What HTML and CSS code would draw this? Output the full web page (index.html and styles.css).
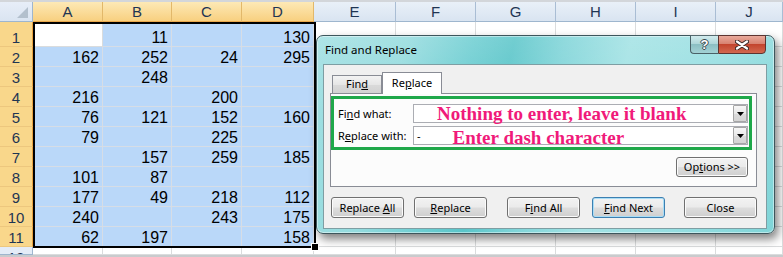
FILE: index.html
```html
<!DOCTYPE html>
<html>
<head>
<meta charset="utf-8">
<title>Find and Replace</title>
<link rel="stylesheet" href="styles.css">
</head>
<body>
<div class="screen">
  <div class="sheet">
    <div class="corner"><span class="tri"></span></div>
    <div class="ch hl">A</div><div class="ch hl">B</div><div class="ch hl">C</div><div class="ch hl">D</div>
    <div class="ch">E</div><div class="ch">F</div><div class="ch">G</div><div class="ch">H</div><div class="ch">I</div><div class="ch">J</div>

    <div class="rh hl">1</div><div class="c"></div><div class="c s">11</div><div class="c s"></div><div class="c s">130</div>
    <div class="c"></div><div class="c"></div><div class="c"></div><div class="c"></div><div class="c"></div><div class="c"></div>

    <div class="rh hl">2</div><div class="c s">162</div><div class="c s">252</div><div class="c s">24</div><div class="c s">295</div>
    <div class="c"></div><div class="c"></div><div class="c"></div><div class="c"></div><div class="c"></div><div class="c"></div>

    <div class="rh hl">3</div><div class="c s"></div><div class="c s">248</div><div class="c s"></div><div class="c s"></div>
    <div class="c"></div><div class="c"></div><div class="c"></div><div class="c"></div><div class="c"></div><div class="c"></div>

    <div class="rh hl">4</div><div class="c s">216</div><div class="c s"></div><div class="c s">200</div><div class="c s"></div>
    <div class="c"></div><div class="c"></div><div class="c"></div><div class="c"></div><div class="c"></div><div class="c"></div>

    <div class="rh hl">5</div><div class="c s">76</div><div class="c s">121</div><div class="c s">152</div><div class="c s">160</div>
    <div class="c"></div><div class="c"></div><div class="c"></div><div class="c"></div><div class="c"></div><div class="c"></div>

    <div class="rh hl">6</div><div class="c s">79</div><div class="c s"></div><div class="c s">225</div><div class="c s"></div>
    <div class="c"></div><div class="c"></div><div class="c"></div><div class="c"></div><div class="c"></div><div class="c"></div>

    <div class="rh hl">7</div><div class="c s"></div><div class="c s">157</div><div class="c s">259</div><div class="c s">185</div>
    <div class="c"></div><div class="c"></div><div class="c"></div><div class="c"></div><div class="c"></div><div class="c"></div>

    <div class="rh hl">8</div><div class="c s">101</div><div class="c s">87</div><div class="c s"></div><div class="c s"></div>
    <div class="c"></div><div class="c"></div><div class="c"></div><div class="c"></div><div class="c"></div><div class="c"></div>

    <div class="rh hl">9</div><div class="c s">177</div><div class="c s">49</div><div class="c s">218</div><div class="c s">112</div>
    <div class="c"></div><div class="c"></div><div class="c"></div><div class="c"></div><div class="c"></div><div class="c"></div>

    <div class="rh hl">10</div><div class="c s">240</div><div class="c s"></div><div class="c s">243</div><div class="c s">175</div>
    <div class="c"></div><div class="c"></div><div class="c"></div><div class="c"></div><div class="c"></div><div class="c"></div>

    <div class="rh hl">11</div><div class="c s">62</div><div class="c s">197</div><div class="c s"></div><div class="c s">158</div>
    <div class="c"></div><div class="c"></div><div class="c"></div><div class="c"></div><div class="c"></div><div class="c"></div>

    <div class="rh r12">12</div><div class="c"></div><div class="c"></div><div class="c"></div><div class="c"></div>
    <div class="c"></div><div class="c"></div><div class="c"></div><div class="c"></div><div class="c"></div><div class="c"></div>

    <div class="selection"><span class="handle"></span></div>
  </div>

  <div class="dialog">
    <div class="titlebar">
      <span class="title">Find and Replace</span>
      <div class="caps">
        <span class="cap help">?</span>
        <span class="cap close">
          <svg width="14" height="10" viewBox="0 0 14 10">
            <path d="M2 1.5 L12 8.5 M12 1.5 L2 8.5" stroke="#3a2a28" stroke-width="4.2" stroke-linecap="round"/>
            <path d="M2 1.5 L12 8.5 M12 1.5 L2 8.5" stroke="#ffffff" stroke-width="2.2" stroke-linecap="round"/>
          </svg>
        </span>
      </div>
    </div>
    <div class="client">
      <div class="tabs">
        <span class="tab">Fin<u>d</u></span>
        <span class="tab active">Re<u>p</u>lace</span>
      </div>
      <div class="panel">
        <div class="annot">
          <div class="field">
            <span class="label">Fi<u>n</u>d what:</span>
            <div class="combo">
              <span class="note n1">Nothing to enter, leave it blank</span>
              <span class="drop"><svg width="7" height="4" viewBox="0 0 7 4"><polygon points="0,0 7,0 3.5,4" fill="#000"/></svg></span>
            </div>
          </div>
          <div class="field">
            <span class="label">R<u>e</u>place with:</span>
            <div class="combo">
              <span class="val">-</span>
              <span class="note n2">Enter dash character</span>
              <span class="drop"><svg width="7" height="4" viewBox="0 0 7 4"><polygon points="0,0 7,0 3.5,4" fill="#000"/></svg></span>
            </div>
          </div>
        </div>
        <div class="opts"><span class="btn opt"><span>Op<u>t</u>ions &gt;&gt;</span></span></div>
      </div>
      <div class="actions">
        <span class="btn b1"><span>Replace <u>A</u>ll</span></span>
        <span class="btn b2"><span><u>R</u>eplace</span></span>
        <span class="btn b3"><span>F<u>i</u>nd All</span></span>
        <span class="btn b4 def"><span><u>F</u>ind Next</span></span>
        <span class="btn b5"><span>Close</span></span>
      </div>
    </div>
  </div>
</div>
</body>
</html>
```

FILE: styles.css
```css
* { box-sizing: border-box; }
html, body { margin: 0; padding: 0; }
body { width: 783px; height: 257px; overflow: hidden; background: #fff; }

.screen {
  position: relative;
  width: 783px;
  height: 257px;
  border-top: 2px solid #d3d6da;
  border-bottom: 2px solid #c9cbcd;
  overflow: hidden;
}

/* ---------- spreadsheet ---------- */
.sheet {
  position: relative;
  display: grid;
  grid-template-columns: 33px 70px 69px 70px 72px 82px 80px 80px 80px 80px 67px;
  grid-template-rows: 20px 25px repeat(10, 20px) 8px;
  font-family: "Liberation Sans", Arial, sans-serif;
}

.corner {
  background: linear-gradient(#e7eef8, #dae4f1);
  border-right: 1px solid #9eb6ce;
  border-bottom: 1px solid #9eb6ce;
  display: flex;
  justify-content: flex-end;
  align-items: flex-end;
  padding: 0 4px 3px 0;
}
.tri {
  width: 0;
  height: 0;
  border-left: 11px solid transparent;
  border-bottom: 11px solid #b3c0cd;
}

.ch {
  font-size: 15px;
  line-height: 19px;
  text-align: center;
  color: #1f3553;
  background: linear-gradient(#e9f0f8, #d9e4f1);
  border-right: 1px solid #a9bdd4;
  border-bottom: 1px solid #9eb6ce;
}
.ch.hl {
  background: linear-gradient(#fde9b6, #f8d080);
  border-right-color: #e2b86a;
  border-bottom-color: #e9a84c;
}

.rh {
  font-size: 15px;
  line-height: 16px;
  color: #1f3553;
  display: flex;
  justify-content: center;
  align-items: flex-end;
  background: #e4ecf7;
  border-right: 1px solid #9eb6ce;
  border-bottom: 1px solid #9eb6ce;
}
.rh.hl {
  background: #f9d78b;
  border-right-color: #e9a23f;
  border-bottom-color: #edc77e;
}
.rh.r12 {
  align-items: flex-start;
  padding-top: 5px;
  overflow: hidden;
  font-size: 15px;
  line-height: 12px;
}

.c {
  font-size: 16px;
  line-height: 16px;
  color: #000;
  display: flex;
  justify-content: flex-end;
  align-items: flex-end;
  padding-right: 3px;
  background: #fff;
  border-right: 1px solid #dadcdd;
  border-bottom: 1px solid #dadcdd;
}
.c.s {
  background: #bad8f9;
  border-right-color: #d6dde6;
  border-bottom-color: #d6dde6;
}

.selection {
  position: absolute;
  grid-column: 2 / 6;
  grid-row: 2 / 13;
  top: 0;
  left: 0;
  right: -2px;
  bottom: -1px;
  border: 2px solid #000;
  z-index: 1;
}
.handle {
  position: absolute;
  right: -4px;
  bottom: -4px;
  width: 6px;
  height: 6px;
  background: #000;
  box-shadow: 0 0 0 1px #fff;
}

/* ---------- dialog ---------- */
.dialog {
  position: absolute;
  left: 316px;
  top: 33px;
  width: 459px;
  height: 199px;
  z-index: 5;
  display: flex;
  flex-direction: column;
  border: 1px solid #3d565c;
  border-radius: 7px;
  background:
    linear-gradient(rgba(255,255,255,0.15), rgba(255,255,255,0) 40%),
    linear-gradient(105deg, #a0dfe2 0%, #94dbde 18%, #6ccdd1 31%, #5ac5c9 39%, #7fd4d8 49%, #a2e2e4 62%, #96dee1 80%, #80d5d8 100%);
  box-shadow: inset 0 0 0 1px rgba(255,255,255,0.45), 3px 5px 10px rgba(0,0,0,0.5);
  font-family: "Noto Sans", "Liberation Sans", sans-serif;
  font-size: 11px;
  color: #000;
}

.titlebar {
  height: 28px;
  flex: none;
  display: flex;
  align-items: flex-start;
  padding: 0 8px;
}
.title { line-height: 28px; font-size: 11.5px; color: #000; }
.caps { margin-left: auto; margin-top: -1px; display: flex; }
.cap {
  height: 19px;
  display: flex;
  align-items: center;
  justify-content: center;
  border: 1px solid #4a6167;
  border-top-color: #56696e;
}
.help {
  width: 28px;
  border-right: none;
  border-radius: 0 0 0 4px;
  background: linear-gradient(#d2ebed 0%, #afd7da 45%, #8cbfc3 50%, #a3d2d5 100%);
  color: #fff;
  font: bold 13px/1 "Liberation Sans", sans-serif;
  text-shadow: 1px 0 #39494d, -1px 0 #39494d, 0 1px #39494d, 0 -1px #39494d;
}
.close {
  width: 48px;
  border-radius: 0 0 4px 0;
  border-color: #5d3430;
  background: linear-gradient(#e9aa9c 0%, #d88371 45%, #c3452e 50%, #d2684f 100%);
}

.client {
  flex: 1;
  margin: 0 7px 4px 6px;
  border: 1px solid #7e9ea3;
  background: #f0f0f0;
  padding: 7px 9px 0 6px;
  display: flex;
  flex-direction: column;
}

.tabs {
  height: 21px;
  display: flex;
  align-items: flex-end;
  padding-left: 2px;
}
.tab {
  width: 50px;
  height: 18px;
  border: 1px solid #898c95;
  border-bottom: none;
  background: linear-gradient(#f3f3f3, #e6e6e6 50%, #dadada 51%, #d2d2d2);
  text-align: center;
  line-height: 16px;
}
.tab.active {
  width: 60px;
  height: 22px;
  margin-bottom: -1px;
  padding-top: 2px;
  background: #fff;
  position: relative;
  z-index: 1;
}

.panel {
  height: 94px;
  border: 1px solid #898c95;
  background: #fcfcfc;
}

.annot {
  width: 421px;
  height: 54px;
  margin-top: 2px;
  border: 3px solid #1fa84a;
  padding: 5px 1px 2px 4px;
  display: flex;
  flex-direction: column;
  gap: 3px;
}
.field { height: 19px; display: flex; align-items: center; }
.label { width: 75px; flex: none; white-space: nowrap; }
.combo {
  width: 335px;
  height: 19px;
  border: 1px solid #abadb3;
  background: #fff;
  display: flex;
  align-items: center;
}
.val { padding-left: 3px; }
.note {
  font: bold 19px/17px "Liberation Serif", "Times New Roman", serif;
  color: #f01a7a;
  white-space: nowrap;
}
.n1 { margin-left: 23px; }
.n2 { margin-left: 32px; margin-top: 4px; }
.drop {
  margin-left: auto;
  width: 14px;
  height: 17px;
  border: 1px solid #a6a6a6;
  border-radius: 1px;
  background: linear-gradient(#f7f7f7, #e8e8e8 50%, #dcdcdc 51%, #d4d4d4);
  display: flex;
  align-items: center;
  justify-content: center;
}

.btn {
  display: flex;
  justify-content: center;
  align-items: center;
  width: 73px;
  height: 21px;
  line-height: 19px;
  white-space: nowrap;
  border: 1px solid #707070;
  border-radius: 3px;
  background: linear-gradient(#f2f2f2 0%, #ebebeb 48%, #dddddd 52%, #cfcfcf 100%);
  box-shadow: inset 0 0 0 1px #fbfbfb;
}
.btn.def {
  border-color: #3c7fb1;
  box-shadow: inset 0 0 0 1px #a9ddf6;
}
.opts {
  display: flex;
  justify-content: flex-end;
  padding-right: 8px;
  margin-top: 7px;
}
.btn.opt { width: 72px; height: 20px; line-height: 18px; }

.actions { display: flex; margin-top: 10px; }
.b1 { margin-left: 1px; }
.b2 { margin-left: 10px; }
.b3 { margin-left: 20px; }
.b4 { margin-left: 12px; }
.b5 { margin-left: 19px; }

u { text-decoration-thickness: 1px; text-underline-offset: 1px; }
```
